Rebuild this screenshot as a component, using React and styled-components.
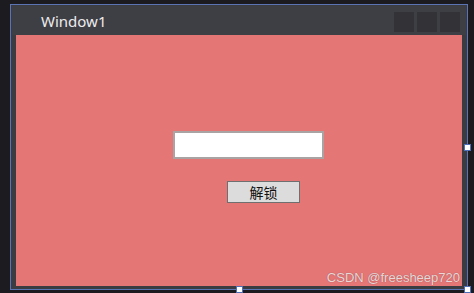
import styled, { createGlobalStyle } from 'styled-components'

const Global = createGlobalStyle`
  html, body {
    margin: 0;
    padding: 0;
    background: #1c1c20;
    font-family: "Microsoft YaHei", "Noto Sans CJK SC", "Noto Sans", sans-serif;
  }
`

const Stage = styled.div`
  width: 474px;
  height: 293px;
  padding: 4px 0 0 10px;
  box-sizing: border-box;
  overflow: hidden;
`

const Selection = styled.div`
  position: relative;
  width: 458px;
  height: 286px;
  box-sizing: border-box;
  border: 1px solid #5b74b4;
  background: #3b3b42;
  padding: 1px 5px 3px 5px;
  display: flex;
  flex-direction: column;
`

const Handle = styled.div`
  position: absolute;
  width: 5px;
  height: 5px;
  background: #ffffff;
  border: 1px solid #4f6fb8;
  left: ${p => p.left};
  top: ${p => p.top};
`

const TitleBar = styled.div`
  height: 29px;
  display: flex;
  align-items: center;
  padding-left: 29px;
  padding-right: 6px;
  background: #3e3e45;
  margin: 0 -4px 0 -4px;
`

const Title = styled.div`
  flex: 1;
  color: #ececec;
  font-family: "Noto Sans", "DejaVu Sans", sans-serif;
  font-size: 15px;
  padding-top: 1px;
`

const Buttons = styled.div`
  display: flex;
  gap: 3px;
  padding-top: 2px;
`

const CaptionButton = styled.div`
  width: 20px;
  height: 20px;
  background: #323237;
`

const Client = styled.div`
  flex: 1;
  position: relative;
  background: #e47676;
  display: flex;
  flex-direction: column;
  padding-top: 96px;
`

const TextBox = styled.div`
  margin-left: 157px;
  width: 151px;
  height: 28px;
  box-sizing: border-box;
  background: #ffffff;
  border: 2px solid #a9a3a3;
`

const UnlockButton = styled.div`
  margin-left: 211px;
  margin-top: 22px;
  width: 73px;
  height: 22px;
  box-sizing: border-box;
  background: #dcdcdc;
  border: 1px solid #6f6f6f;
  display: flex;
  align-items: center;
  justify-content: center;
  font-size: 14px;
  color: #111;
`

const Watermark = styled.div`
  position: absolute;
  right: 2px;
  bottom: 1px;
  font-family: "Liberation Sans", Arial, sans-serif;
  font-size: 13px;
  color: rgba(255, 255, 255, 0.78);
  text-shadow: 0 0 1px rgba(0, 0, 0, 0.4);
`

export default function App() {
  return (
    <Stage>
      <Global />
      <Selection>
        <TitleBar>
          <Title>Window1</Title>
          <Buttons>
            <CaptionButton />
            <CaptionButton />
            <CaptionButton />
          </Buttons>
        </TitleBar>
        <Client>
          <TextBox />
          <UnlockButton>解锁</UnlockButton>
          <Watermark>CSDN @freesheep720</Watermark>
        </Client>
        <Handle left="453px" top="139px" />
        <Handle left="225px" top="281px" />
        <Handle left="453px" top="281px" />
      </Selection>
    </Stage>
  )
}
